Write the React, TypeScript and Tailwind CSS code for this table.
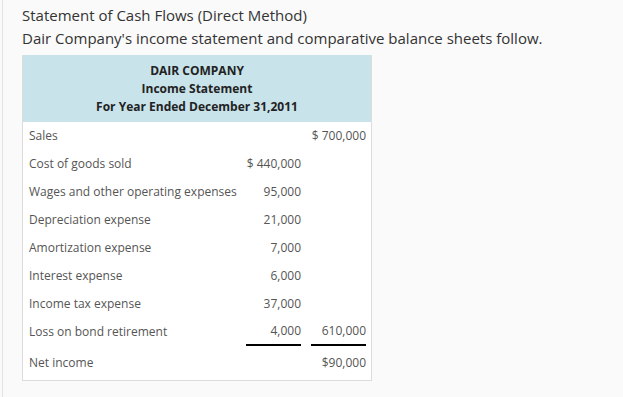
import React from 'react';

// One line of the income statement
interface Row {
  label: string;
  first?: string;
  second?: string;
  underline?: boolean;
}

const rows: Row[] = [
  { label: 'Sales', second: '$ 700,000' },
  { label: 'Cost of goods sold', first: '$ 440,000' },
  { label: 'Wages and other operating expenses', first: '95,000' },
  { label: 'Depreciation expense', first: '21,000' },
  { label: 'Amortization expense', first: '7,000' },
  { label: 'Interest expense', first: '6,000' },
  { label: 'Income tax expense', first: '37,000' },
  { label: 'Loss on bond retirement', first: '4,000', second: '610,000', underline: true },
];

const App: React.FC = () => {
  return (
    <div
      className="w-[623px] h-[397px] bg-[#fafafa] pl-[2px]"
      style={{ fontFamily: '"Open Sans", sans-serif' }}
    >
      <div className="h-full border-l border-[#e2e2e2] pl-[19px] pt-[4px] text-[#333]">
        {/* Question text */}
        <p className="text-[15px] leading-[23px]">Statement of Cash Flows (Direct Method)</p>
        <p className="text-[15px] leading-[23px]">
          Dair Company's income statement and comparative balance sheets follow.
        </p>

        {/* Statement table */}
        <div className="mt-[5px] w-[350px] border border-[#dcdcdc] border-t-0 bg-white">
          <div className="bg-[#c8e3ea] h-[67px] flex flex-col items-center justify-center text-[12px] font-bold leading-[18px] text-[#222]">
            <div>DAIR COMPANY</div>
            <div>Income Statement</div>
            <div>For Year Ended December 31,2011</div>
          </div>

          <div className="text-[12px] text-[#555]">
            {rows.map((row) => (
              <div key={row.label} className="flex h-[28px]">
                <div className="flex-1 pl-[6px] flex items-center">{row.label}</div>
                <div
                  className={`w-[55px] mr-[10px] flex items-center justify-end ${
                    row.underline ? 'border-b-2 border-black' : ''
                  }`}
                >
                  {row.first}
                </div>
                <div
                  className={`w-[55px] mr-[5px] flex items-center justify-end ${
                    row.underline ? 'border-b-2 border-black' : ''
                  }`}
                >
                  {row.second}
                </div>
              </div>
            ))}
            {/* Net income */}
            <div className="flex h-[34px]">
              <div className="flex-1 pl-[6px] flex items-center">Net income</div>
              <div className="w-[55px] mr-[5px] flex items-center justify-end">$90,000</div>
            </div>
          </div>
        </div>
      </div>
    </div>
  );
};

export default App;
